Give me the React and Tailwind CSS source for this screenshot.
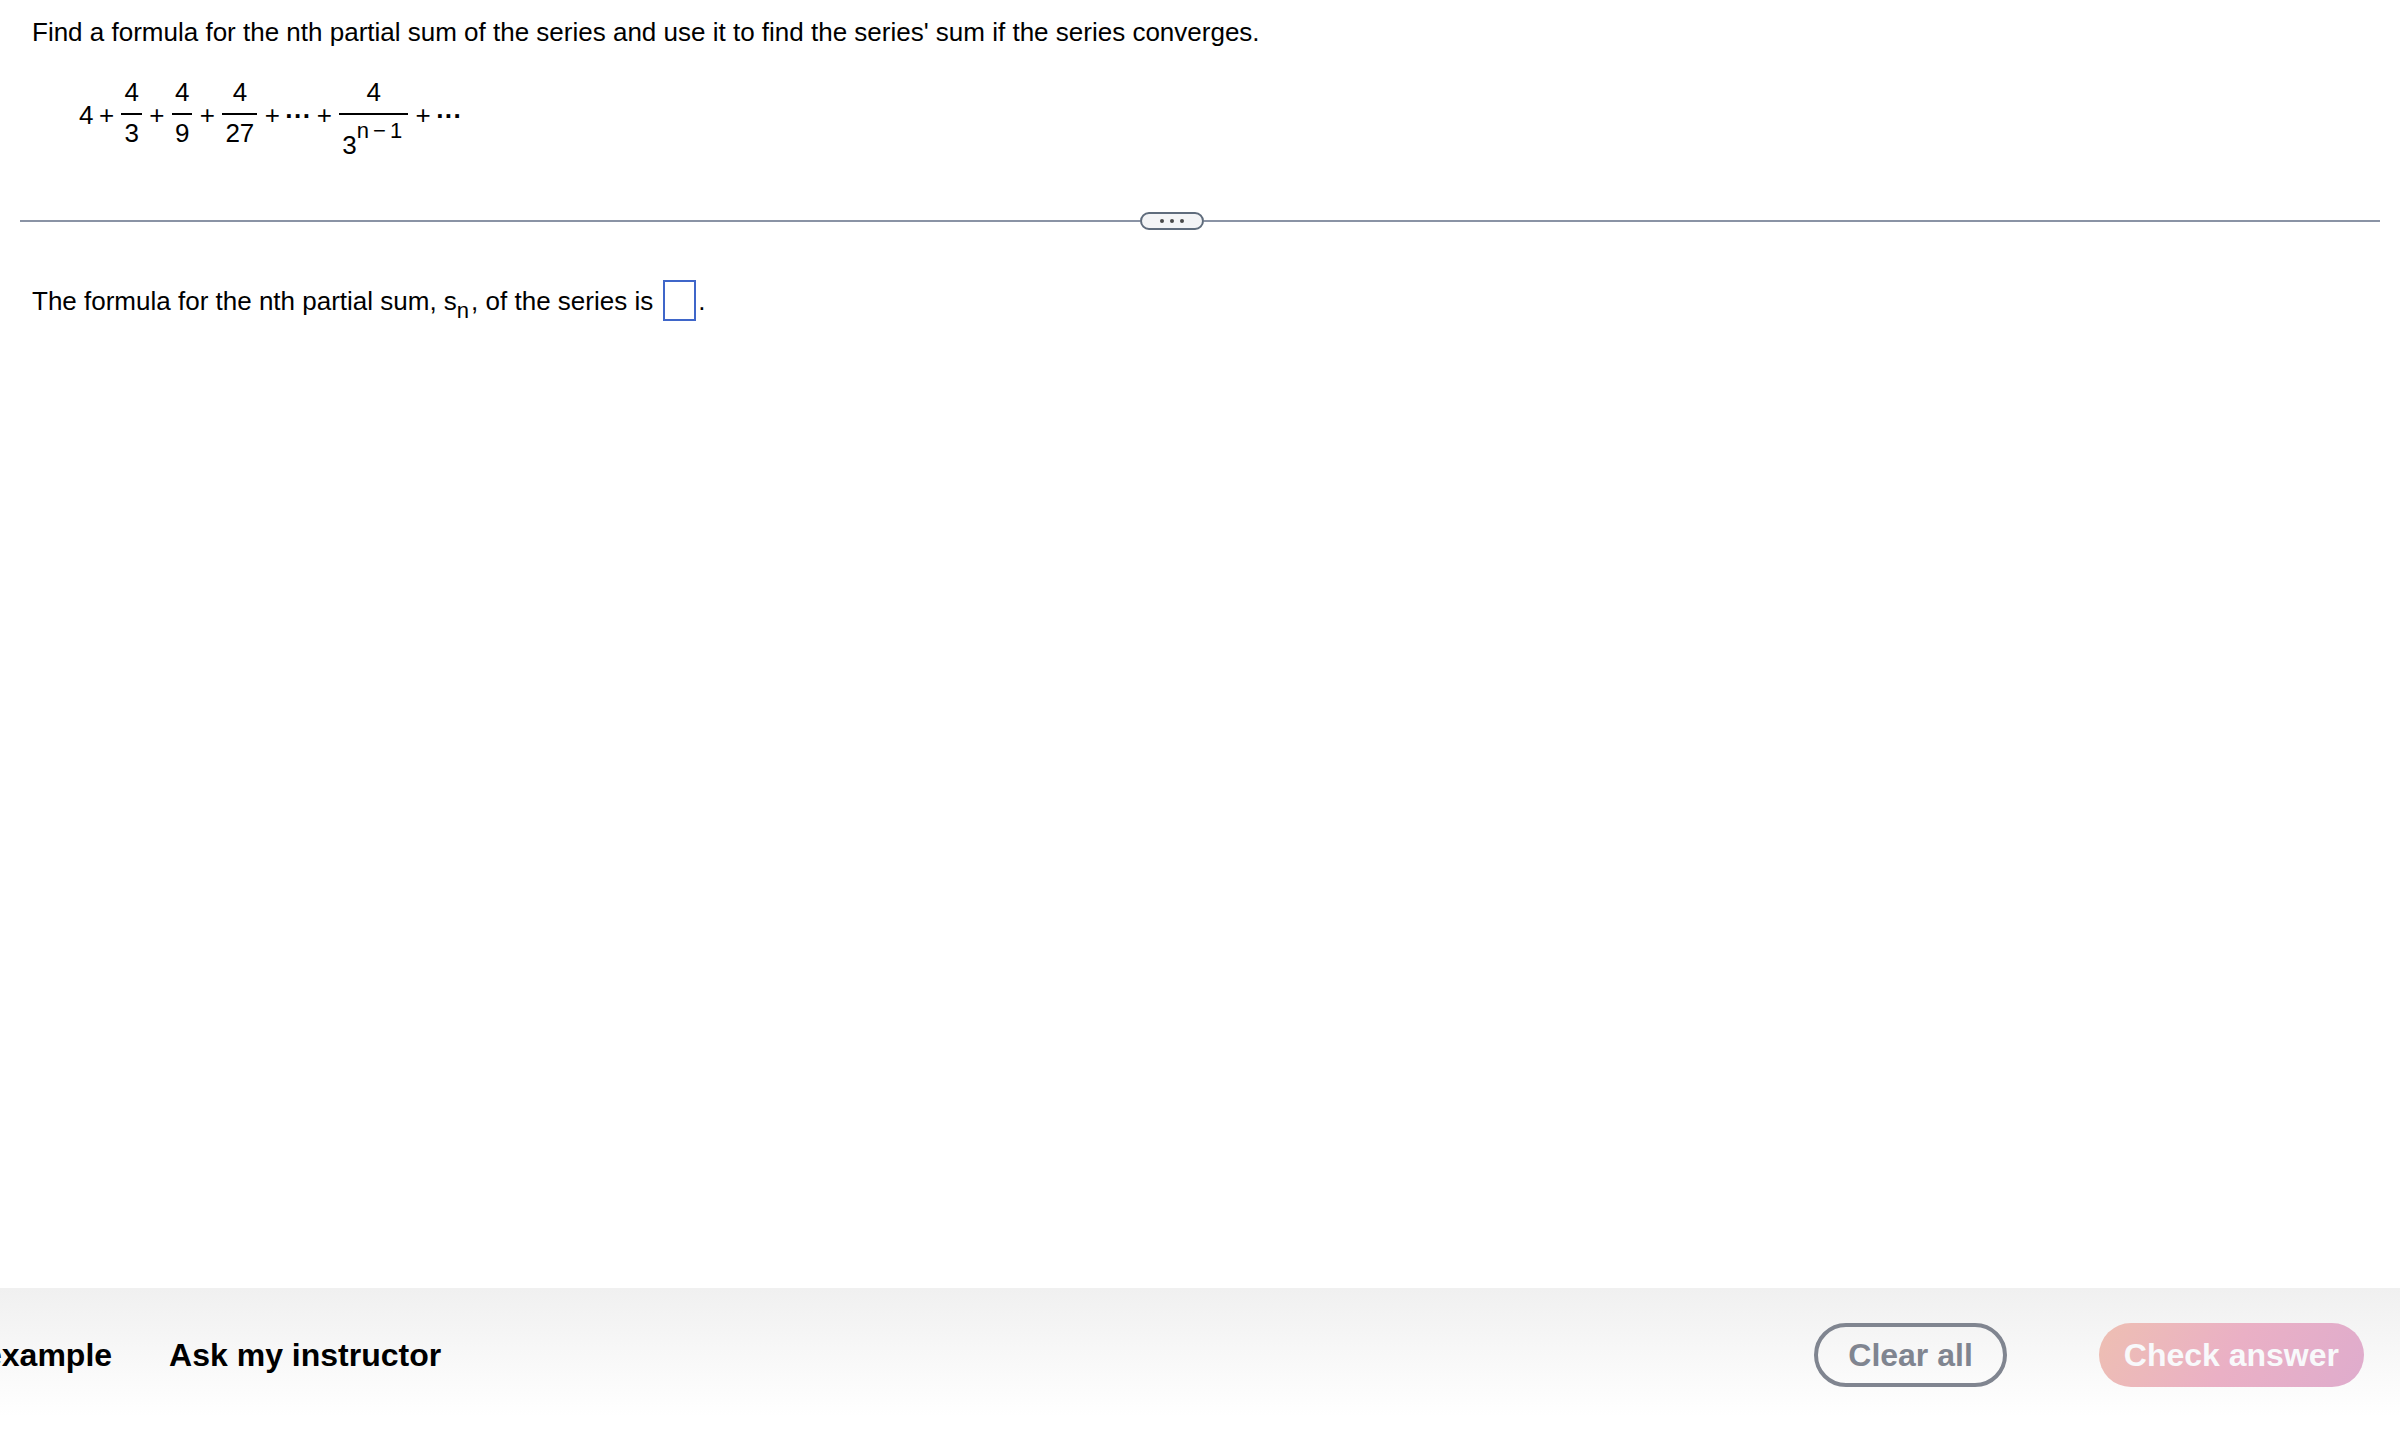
import React, { useState } from 'react';

function Operator({ children = '+' }) {
    return <span className="mt-[23px] flex w-4 justify-center">{children}</span>;
}

function Dots() {
    return <span className="mt-6 flex w-[22px] justify-center font-bold">···</span>;
}

function Fraction({ top, children }) {
    return (
        <span className="flex flex-col items-stretch text-center">
            <span className="border-b-2 border-black px-[3px] pb-[7px]">{top}</span>
            <span className="px-[3px] pt-1">{children}</span>
        </span>
    );
}

function Series() {
    return (
        <div className="flex items-start gap-[7px] pl-[47px] text-[26px] leading-7">
            <span className="-mr-0.5 mt-[23px]">4</span>
            <Operator />
            <Fraction top="4">3</Fraction>
            <Operator />
            <Fraction top="4">9</Fraction>
            <Operator />
            <Fraction top="4">27</Fraction>
            <Operator />
            <Dots />
            <Operator />
            <Fraction top="4">
                <span className="flex items-start pr-[3px]">
                    <span className="pt-3">3</span>
                    <span className="-mt-0.5 flex gap-1 text-[22px] leading-7">
                        <span>n</span>
                        <span>−</span>
                        <span>1</span>
                    </span>
                </span>
            </Fraction>
            <Operator />
            <Dots />
        </div>
    );
}

export default function App() {
    const [answer, setAnswer] = useState('');

    return (
        <div className="flex min-h-screen flex-col bg-white font-['Liberation_Sans',Arial,sans-serif] text-black">
            <main className="flex-1">
                <section className="px-8 pt-[17px]">
                    <p className="mb-[31px] text-[26px] leading-[30px]">
                        Find a formula for the nth partial sum of the series and use it to find the series' sum if the series converges.
                    </p>
                    <Series />
                </section>

                <div className="mt-[53px] flex items-center px-5">
                    <div className="h-0.5 flex-[20] bg-[#8a93a5]" />
                    <button
                        type="button"
                        aria-label="Resize panels"
                        className="flex h-[18px] w-16 items-center justify-center gap-1.5 rounded-full border-2 border-[#5f6c7c] bg-[#f3f4f6]"
                    >
                        <span className="size-1 rounded-full bg-[#4a4a4a]" />
                        <span className="size-1 rounded-full bg-[#4a4a4a]" />
                        <span className="size-1 rounded-full bg-[#4a4a4a]" />
                    </button>
                    <div className="h-0.5 flex-[21] bg-[#8a93a5]" />
                </div>

                <section className="flex items-center px-8 pt-[50px] text-[26px] leading-[30px]">
                    <label htmlFor="answer">
                        The formula for the nth partial sum, s
                        <sub className="-bottom-2 mr-0.5 text-[22px]">n</sub>, of the series is
                    </label>
                    <input
                        id="answer"
                        value={answer}
                        onChange={(e) => setAnswer(e.target.value)}
                        className="ml-2.5 mr-0.5 h-[41px] w-[33px] border-2 border-[#3f66c9] px-1 outline-none"
                    />
                    <span>.</span>
                </section>
            </main>

            <footer className="flex h-[143px] items-start justify-between overflow-hidden bg-linear-to-b from-[#f0f0f0] to-white to-90% pr-9 pt-[35px] text-[32px] font-bold leading-9">
                <div className="-ml-4 flex h-16 items-center gap-[57px]">
                    <button type="button">example</button>
                    <button type="button">Ask my instructor</button>
                </div>
                <div className="flex gap-[92px]">
                    <button type="button" className="h-16 rounded-full border-4 border-[#808590] px-[30px] text-[#808590]">
                        Clear all
                    </button>
                    <button
                        type="button"
                        className="h-16 rounded-full bg-linear-120 from-[#eebfb2] via-[#eab0c5] to-[#dfaccd] px-[25px] text-[#f8f9fb]"
                    >
                        Check answer
                    </button>
                </div>
            </footer>
        </div>
    );
}
